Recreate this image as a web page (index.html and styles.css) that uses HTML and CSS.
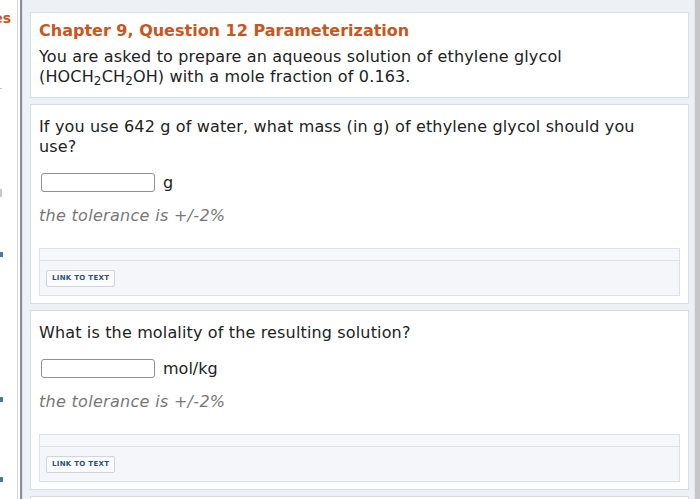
FILE: index.html
```html
<!DOCTYPE html>
<html>
<head>
<meta charset="utf-8">
<link rel="stylesheet" href="styles.css">
</head>
<body>
<div class="sidebar">
  <div class="side-title"><span>es</span></div>
  <div class="mark mark-a"></div>
  <div class="mark mark-b"></div>
  <div class="mark mark-c"></div>
  <div class="mark mark-d"></div>
  <div class="mark mark-e"></div>
</div>
<div class="rule"></div>
<main class="main">
  <section class="card intro">
    <h1 class="title">Chapter 9, Question 12 Parameterization</h1>
    <p class="text">You are asked to prepare an aqueous solution of ethylene glycol<br>(HOCH<sub>2</sub>CH<sub>2</sub>OH) with a mole fraction of 0.163.</p>
  </section>
  <section class="card part">
    <p class="text question">If you use 642 g of water, what mass (in g) of ethylene glycol should you use?</p>
    <div class="answer"><span class="input"></span><span class="unit">g</span></div>
    <p class="tolerance">the tolerance is +/-2%</p>
    <div class="linkbox">
      <div class="linkbox-head"></div>
      <div class="linkbox-body"><span class="btn">LINK TO TEXT</span></div>
    </div>
  </section>
  <section class="card part">
    <p class="text question">What is the molality of the resulting solution?</p>
    <div class="answer"><span class="input"></span><span class="unit">mol/kg</span></div>
    <p class="tolerance">the tolerance is +/-2%</p>
    <div class="linkbox">
      <div class="linkbox-head"></div>
      <div class="linkbox-body"><span class="btn">LINK TO TEXT</span></div>
    </div>
  </section>
  <section class="card part"></section>
</main>
<div class="edge"></div>
</body>
</html>
```
FILE: styles.css
```css
html, body {
  margin: 0;
  padding: 0;
}
body {
  width: 700px;
  height: 499px;
  overflow: hidden;
  display: flex;
  font-family: "DejaVu Sans", Verdana, sans-serif;
  color: #222;
  background: #fff;
}
.sidebar {
  width: 17px;
  flex: none;
  background: #fff;
  border-right: 1px solid #d4d4d4;
  display: flex;
  flex-direction: column;
}
.side-title {
  width: 11px;
  height: 20px;
  margin-top: 8px;
  overflow: hidden;
  display: flex;
  justify-content: flex-end;
  font-weight: bold;
  font-size: 14px;
  line-height: 20px;
  color: #c8561e;
}
.side-title span {
  flex: none;
}
.mark {
  width: 3px;
  background: #b9c2cc;
}
.mark-a { height: 1px; margin-top: 60px; width: 2px; }
.mark-b { height: 8px; margin-top: 100px; width: 2px; background: #c8c8c8; }
.mark-c { height: 5px; margin-top: 55px; background: #4a78a8; }
.mark-d { height: 5px; margin-top: 140px; background: #4a78a8; }
.mark-e { height: 5px; margin-top: 75px; background: #4a78a8; }
.rule {
  width: 2px;
  flex: none;
  margin-left: 2px;
  background: #8c8c8c;
}
.main {
  flex: 1;
  background: #edf1f5;
  border-left: 1px solid #dfe4ea;
  padding: 12px 5px 0 7px;
  display: flex;
  flex-direction: column;
  gap: 6px;
  min-width: 0;
}
.card {
  background: #fff;
  border: 1px solid #d8dee5;
  padding: 0 8px;
  flex: none;
}
.intro {
  padding-top: 8px;
  padding-bottom: 10px;
}
.part {
  padding-top: 12px;
  padding-bottom: 7px;
}
.title {
  margin: 0;
  font-size: 16px;
  line-height: 20px;
  font-weight: bold;
  color: #c8561e;
}
.text {
  margin: 6px 0 0;
  font-size: 16px;
  line-height: 20px;
  letter-spacing: 0.15px;
}
.text sub {
  font-size: 12px;
  line-height: 0;
  vertical-align: -3px;
}
.question {
  margin: 0;
  padding-right: 36px;
}
.answer {
  display: flex;
  align-items: center;
  margin-top: 16px;
  padding-left: 2px;
  height: 19px;
}
.input {
  width: 112px;
  height: 17px;
  border: 1px solid #8f8f8f;
  border-radius: 3px;
  background: #fff;
}
.unit {
  margin-left: 8px;
  font-size: 16px;
  line-height: 19px;
}
.tolerance {
  margin: 14px 0 0;
  font-size: 16px;
  line-height: 20px;
  font-style: italic;
  color: #777;
  letter-spacing: 0.3px;
}
.linkbox {
  margin-top: 22px;
  border: 1px solid #dbe1e8;
  background: #f4f6f9;
}
.linkbox-head {
  height: 11px;
  background: #f5f7fa;
  border-bottom: 1px solid #dbe1e8;
}
.linkbox-body {
  height: 34px;
  padding: 4px 0 0 6px;
  box-sizing: border-box;
}
.btn {
  display: inline-block;
  box-sizing: border-box;
  height: 17px;
  padding: 0 5px;
  border: 1px solid #cdd5df;
  border-radius: 2px;
  background: #fafbfd;
  color: #2f4f85;
  font-size: 7px;
  font-weight: bold;
  line-height: 15px;
  letter-spacing: 0.3px;
}
.edge {
  width: 5px;
  flex: none;
  background: #c6c6c6;
  border-left: 1px solid #e3e7eb;
}
```
